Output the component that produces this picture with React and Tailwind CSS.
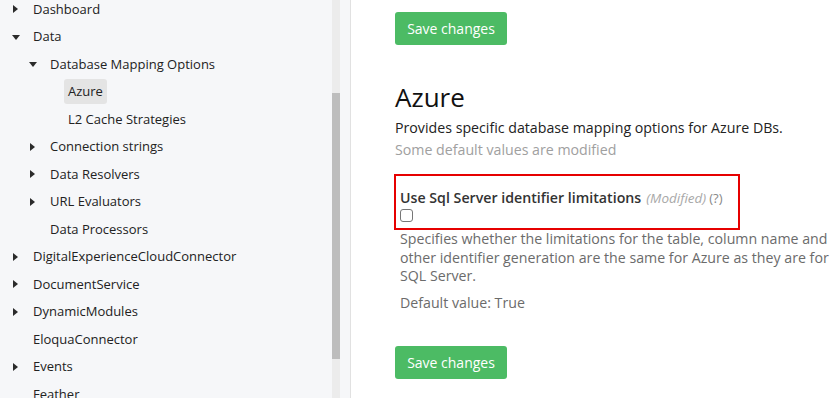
import React from "react";

const items = [
  { label: "Dashboard", level: 0, caret: "right" },
  { label: "Data", level: 0, caret: "down" },
  { label: "Database Mapping Options", level: 1, caret: "down" },
  { label: "Azure", level: 2, selected: true },
  { label: "L2 Cache Strategies", level: 2 },
  { label: "Connection strings", level: 1, caret: "right" },
  { label: "Data Resolvers", level: 1, caret: "right" },
  { label: "URL Evaluators", level: 1, caret: "right" },
  { label: "Data Processors", level: 1 },
  { label: "DigitalExperienceCloudConnector", level: 0, caret: "right" },
  { label: "DocumentService", level: 0, caret: "right" },
  { label: "DynamicModules", level: 0, caret: "right" },
  { label: "EloquaConnector", level: 0 },
  { label: "Events", level: 0, caret: "right" },
  { label: "Feather", level: 0 },
];

const padByLevel = ["pl-[11px]", "pl-[28px]", "pl-[46px]"];

function Caret({ dir }) {
  if (dir === "right") {
    return (
      <svg width="8" height="10" viewBox="0 0 8 10" className="block">
        <path d="M2 1 L7 5 L2 9 Z" fill="#2b2b2b" />
      </svg>
    );
  }
  if (dir === "down") {
    return (
      <svg width="10" height="8" viewBox="0 0 10 8" className="block">
        <path d="M1 2 L9 2 L5 7 Z" fill="#2b2b2b" />
      </svg>
    );
  }
  return null;
}

function Row({ item }) {
  return (
    <div className={`flex h-[27.5px] items-center ${padByLevel[item.level]}`}>
      <div className="flex w-[22px] shrink-0 items-center">
        <Caret dir={item.caret} />
      </div>
      {item.selected ? (
        <span className="-ml-[4px] rounded-[3px] bg-[#e4e4e4] px-[4px] py-[4px] leading-[17px]">
          {item.label}
        </span>
      ) : (
        <span className="whitespace-nowrap">{item.label}</span>
      )}
    </div>
  );
}

function SaveButton() {
  return (
    <button className="flex h-[33px] w-[112px] items-center justify-center rounded-[3px] bg-[#4cbb64] text-[14px] text-white">
      Save changes
    </button>
  );
}

export default function App() {
  return (
    <div
      className="flex h-[398px] w-[837px] overflow-hidden bg-white text-[#222]"
      style={{ fontFamily: '"Open Sans", "Noto Sans", sans-serif' }}
    >
      <aside className="flex h-full w-[351px] shrink-0 border-r border-[#e1e1e1] bg-[#f6f7f9]">
        <div className="-mt-[4.5px] flex-1 text-[13px]">
          {items.map((it) => (
            <Row key={it.label} item={it} />
          ))}
        </div>
        <div className="mr-[10px] h-full w-[8px] bg-[#ececec]">
          <div className="mt-[93px] h-[266px] w-full bg-[#bdbdbd]" />
        </div>
      </aside>
      <main className="min-w-0 flex-1 pl-[44px] pt-[12px]">
        <SaveButton />
        <h1 className="mt-[37px] text-[26px] leading-[31px] text-[#111]">Azure</h1>
        <p className="mt-[4px] whitespace-nowrap text-[14.2px] leading-[22px] text-[#222]">
          Provides specific database mapping options for Azure DBs.
        </p>
        <p className="whitespace-nowrap text-[14.2px] leading-[22px] text-[#a0a0a0]">
          Some default values are modified
        </p>
        <div className="-ml-[1px] mt-[13px] w-[346px] border-2 border-[#e60000] pb-[6px] pl-[4px] pt-[13px]">
          <div className="flex h-[18px] items-baseline whitespace-nowrap leading-[18px]">
            <span className="text-[14.2px] font-semibold text-[#333]">
              Use Sql Server identifier limitations
            </span>
            <span className="ml-[5px] text-[13.5px] italic text-[#a8a8a8]">(Modified)</span>
            <span className="ml-[3px] text-[13px] text-[#888]">(?)</span>
          </div>
          <div className="mt-[2px] h-[13px] w-[13px] rounded-[3px] border border-[#767676] bg-white" />
        </div>
        <div className="w-[445px] pl-[5px]">
          <p className="text-[14.2px] leading-[18.5px] text-[#6b6b6b]">
            Specifies whether the limitations for the table, column name and other identifier
            generation are the same for Azure as they are for SQL Server.
          </p>
          <p className="mt-[8px] text-[14.2px] leading-[18.5px] text-[#6b6b6b]">
            Default value: True
          </p>
        </div>
        <div className="mt-[34px]">
          <SaveButton />
        </div>
      </main>
    </div>
  );
}
